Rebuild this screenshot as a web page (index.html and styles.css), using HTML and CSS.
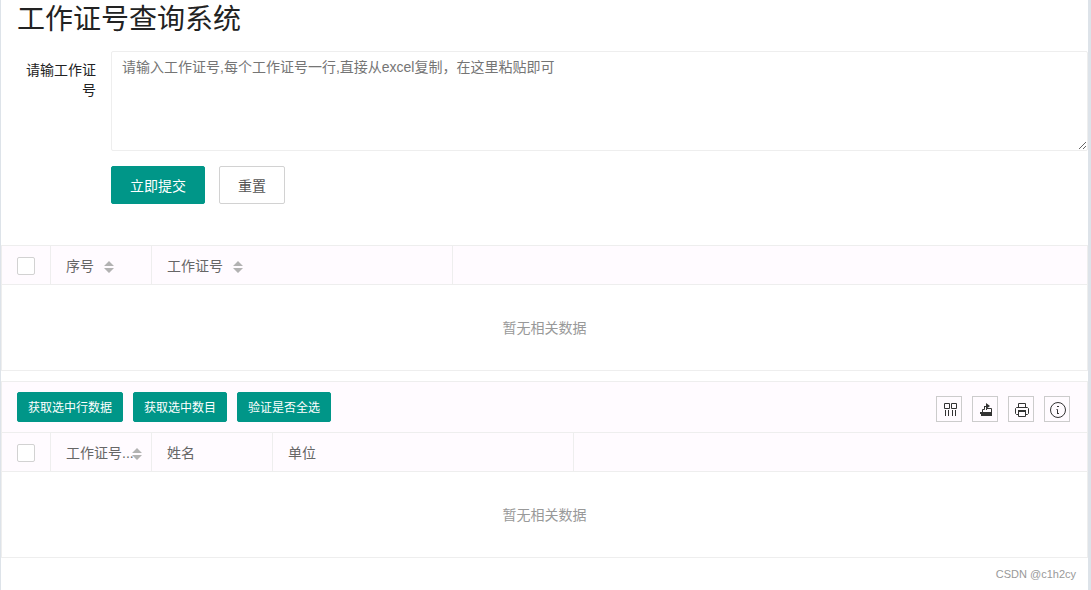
FILE: index.html
```html
<!DOCTYPE html>
<html lang="zh-CN">

<head>
    <meta charset="UTF-8">
    <meta name="viewport" content="width=device-width, initial-scale=1.0">
    <title>工作证号查询系统</title>
    <link rel="stylesheet" href="styles.css">
</head>

<body>
    <h1>工作证号查询系统</h1>

    <form class="form">
        <div class="form-item">
            <label class="form-label" for="ids">请输工作证号</label>
            <textarea class="textarea" id="ids" name="ids" placeholder="请输入工作证号,每个工作证号一行,直接从excel复制，在这里粘贴即可"></textarea>
        </div>
        <div class="form-buttons">
            <button type="submit" class="btn">立即提交</button>
            <button type="reset" class="btn btn-primary">重置</button>
        </div>
    </form>

    <div class="table-view">
        <table>
            <thead>
                <tr>
                    <th class="col-check"><input type="checkbox" aria-label="全选"></th>
                    <th class="col-small">序号<svg class="sort" viewBox="0 0 10 12"><path d="M5 0l5 5H0zM0 7h10l-5 5z" /></svg></th>
                    <th class="col-large">工作证号<svg class="sort" viewBox="0 0 10 12"><path d="M5 0l5 5H0zM0 7h10l-5 5z" /></svg></th>
                    <th></th>
                </tr>
            </thead>
            <tbody>
                <tr>
                    <td class="none" colspan="4">暂无相关数据</td>
                </tr>
            </tbody>
        </table>
    </div>

    <div class="table-view">
        <div class="toolbar">
            <button type="button" class="btn btn-sm">获取选中行数据</button>
            <button type="button" class="btn btn-sm">获取选中数目</button>
            <button type="button" class="btn btn-sm">验证是否全选</button>
            <div class="tool-self">
                <button type="button" class="tool" aria-label="筛选列">
                    <svg viewBox="0 0 16 16"><path d="M2.5 1.5h5v5h-5zM9.5 1.5h5v5h-5zM3.5 8v6M6.5 8v6M10.5 8v6M13.5 8v6" /></svg>
                </button>
                <button type="button" class="tool" aria-label="导出">
                    <svg viewBox="0 0 16 16"><path class="solid" d="M2 10h12v4H3v-2H2zM8 1l4 3-4 3V5H6V4h2z" /><path d="M4.5 10V7.500h2V4.500h2M8.500 8V6.500h5V10" /></svg>
                </button>
                <button type="button" class="tool" aria-label="打印">
                    <svg viewBox="0 0 16 16"><path d="M4.500 5V1.500h7V5M4 12.500H2.500l-1-1v-5l1-1h11l1 1v5l-1 1H12M4.500 8.500h7v6h-7z" /><path class="solid" d="M4 8h8v2H4z" /></svg>
                </button>
                <button type="button" class="tool" aria-label="提示">
                    <svg viewBox="0 0 16 16"><circle cx="8" cy="8" r="7.500" /><path d="M7 4.500h2M6.500 7.500h1V12M7 11.500h2" /></svg>
                </button>
            </div>
        </div>
        <table>
            <thead>
                <tr>
                    <th class="col-check"><input type="checkbox" aria-label="全选"></th>
                    <th class="col-small">工作证号...<svg class="sort sort-tight" viewBox="0 0 10 12"><path d="M5 0l5 5H0zM0 7h10l-5 5z" /></svg></th>
                    <th class="col-medium">姓名</th>
                    <th class="col-large">单位</th>
                    <th></th>
                </tr>
            </thead>
            <tbody>
                <tr>
                    <td class="none" colspan="5">暂无相关数据</td>
                </tr>
            </tbody>
        </table>
    </div>

    <div class="credit">CSDN @c1h2cy</div>
</body>

</html>
```

FILE: styles.css
```css
* {
    box-sizing: border-box;
}

body {
    margin: 0;
    min-height: 100vh;
    border-left: 1px solid #dde3e9;
    border-right: 3px solid #dde3e9;
    background-color: #fff;
    color: #222;
    font-family: "Liberation Sans", "Noto Sans CJK SC", sans-serif;
    font-size: 14px;
    line-height: 20px;
}

h1 {
    margin: 0 0 11px;
    padding-left: 16px;
    font-size: 28px;
    font-weight: 400;
    line-height: 40px;
}

/* form */
.form {
    margin-bottom: 41px;
}

.form-item {
    display: flex;
    margin-bottom: 15px;
}

.form-label {
    flex: none;
    width: 110px;
    padding: 9px 15px;
    text-align: right;
}

.textarea {
    flex: 1;
    height: 100px;
    padding: 5px 10px;
    border: 1px solid #eee;
    border-radius: 2px;
    font: inherit;
    resize: vertical;
}

.textarea::placeholder {
    color: #757575;
}

.form-buttons {
    display: flex;
    gap: 14px;
    padding-left: 110px;
}

.btn {
    height: 38px;
    padding: 1px 18px 0;
    border: 1px solid #009688;
    border-radius: 2px;
    background-color: #009688;
    color: #fff;
    font: inherit;
    white-space: nowrap;
    cursor: pointer;
}

.btn-primary {
    border-color: #d2d2d2;
    background-color: #fff;
    color: #555;
}

.btn-sm {
    height: 30px;
    padding: 1px 10px 0;
    font-size: 12px;
}

/* tables */
.table-view {
    margin-bottom: 10px;
    border: 1px solid #eee;
}

.toolbar {
    display: flex;
    gap: 10px;
    padding: 10px 17px 10px 15px;
    border-bottom: 1px solid #eee;
    background-color: #fffbff;
}

.tool-self {
    display: flex;
    gap: 10px;
    align-items: flex-end;
    margin-left: auto;
}

.tool {
    display: flex;
    align-items: center;
    justify-content: center;
    width: 26px;
    height: 26px;
    padding: 2px 0 0 2px;
    border: 1px solid #ccc;
    background: none;
    cursor: pointer;
}

.tool svg {
    width: 16px;
    height: 16px;
    fill: none;
    stroke: #333;
}

.tool .solid {
    fill: #333;
    stroke: none;
}

table {
    width: 100%;
    border-collapse: separate;
    border-spacing: 0;
    table-layout: fixed;
}

th {
    height: 39px;
    padding: 1px 15px 0;
    border-right: 1px solid #eee;
    border-bottom: 1px solid #eee;
    background-color: #fffbff;
    color: #666;
    font-weight: 400;
    text-align: left;
    white-space: nowrap;
}

th:last-child {
    border-right: none;
}

.col-check {
    width: 49px;
}

.col-small {
    width: 101px;
}

.col-medium {
    width: 121px;
}

.col-large {
    width: 301px;
}

th input {
    display: block;
    width: 18px;
    height: 18px;
    margin: 0;
    border: 1px solid #d2d2d2;
    border-radius: 2px;
    background-color: #fff;
    appearance: none;
}

.sort {
    width: 10px;
    height: 12px;
    margin-left: 10px;
    fill: #b2b2b2;
    vertical-align: -2px;
}

.sort-tight {
    margin-left: -2px;
}

.none {
    padding: 31px 15px 29px;
    color: #999;
    line-height: 25px;
    text-align: center;
}

.credit {
    padding-right: 12px;
    color: #999;
    font-size: 11px;
    line-height: 12px;
    text-align: right;
}
```
